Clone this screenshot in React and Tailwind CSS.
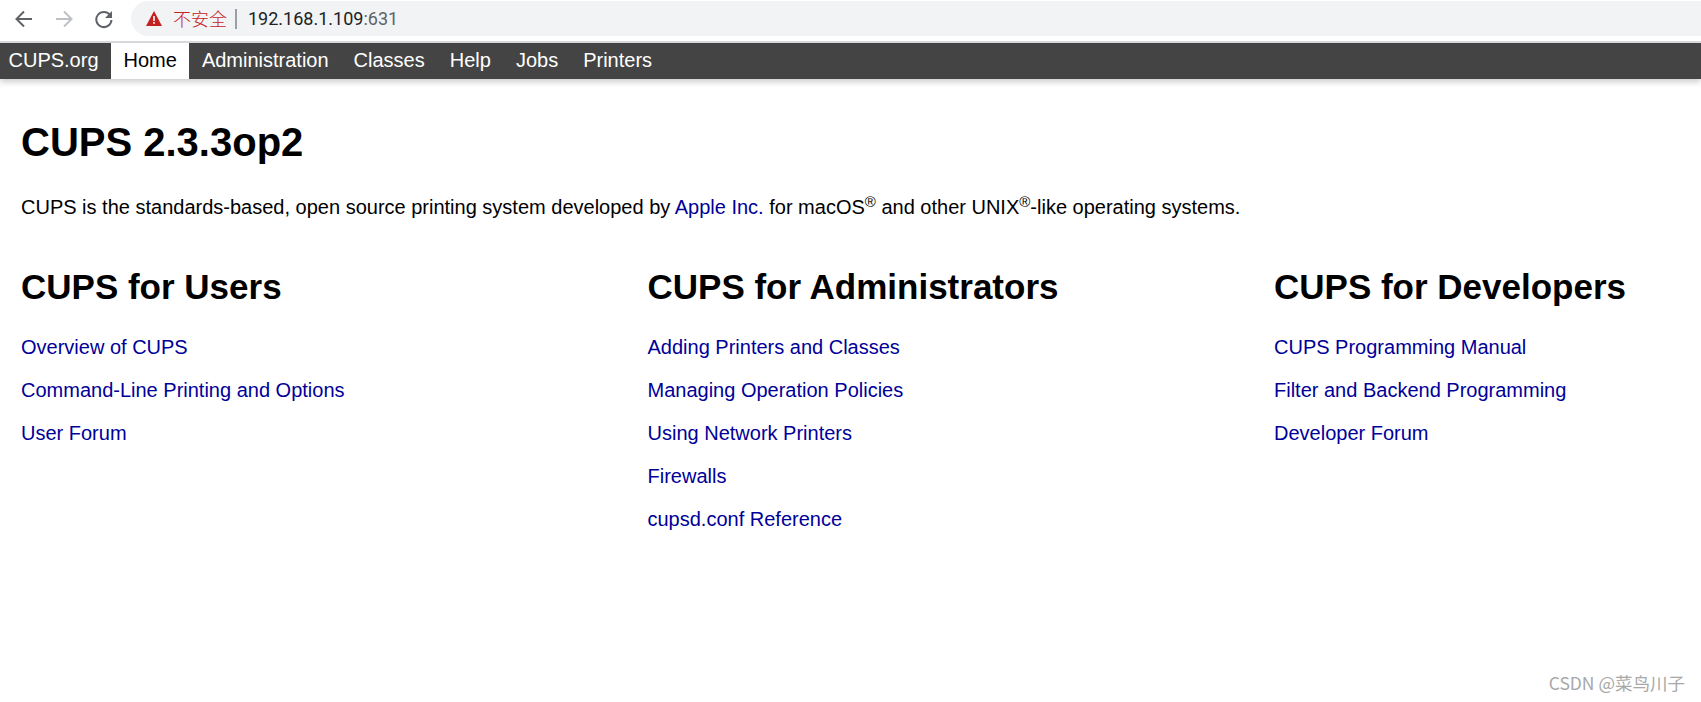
import React from 'react';

const navItems = ['Administration', 'Classes', 'Help', 'Jobs', 'Printers'];

const columns = [
  {
    title: 'CUPS for Users',
    links: ['Overview of CUPS', 'Command-Line Printing and Options', 'User Forum'],
  },
  {
    title: 'CUPS for Administrators',
    links: ['Adding Printers and Classes', 'Managing Operation Policies', 'Using Network Printers', 'Firewalls', 'cupsd.conf Reference'],
  },
  {
    title: 'CUPS for Developers',
    links: ['CUPS Programming Manual', 'Filter and Backend Programming', 'Developer Forum'],
  },
];

const BrowserBar = () => (
  <div className="flex h-[41px] items-start bg-white">
    <div className="flex h-[36px] w-[131px] shrink-0 items-center pl-[14px] pt-[1px]">
      {/* back */}
      <svg width="20" height="20" viewBox="0 0 20 20" fill="none" stroke="#5f6368" strokeWidth="2">
        <path d="M18 10H3M10 2.5 2.5 10l7.5 7.5" />
      </svg>
      {/* forward */}
      <svg className="ml-[20px]" width="20" height="20" viewBox="0 0 20 20" fill="none" stroke="#bdc1c6" strokeWidth="2">
        <path d="M2 10h15M10 2.5l7.5 7.5-7.5 7.5" />
      </svg>
      {/* reload */}
      <svg className="ml-[20px]" width="20" height="20" viewBox="0 0 20 20" fill="none">
        <path d="M16.2 6.2A7.6 7.6 0 1 0 17.5 11" stroke="#5f6368" strokeWidth="2" />
        <path d="M18 2v7h-7z" fill="#5f6368" />
      </svg>
    </div>
    <div className="mt-[1px] flex h-[35px] flex-1 items-center rounded-l-[18px] bg-[#f1f3f4] pl-[15px] font-['Roboto','Noto_Sans_CJK_SC',sans-serif] text-[18px]">
      <svg width="16" height="15" viewBox="0 0 16 15">
        <path d="M8 0 16 15H0z" fill="#c5221f" />
        <path d="M7.2 5h1.6v5H7.2zM7.2 11h1.6v1.7H7.2z" fill="#fff" />
      </svg>
      <span className="ml-[11px] font-['Noto_Sans_CJK_SC',sans-serif] text-[18px] font-light text-[#c5221f]">不安全</span>
      <span className="ml-[8px] h-[20px] w-[2px] bg-[#9aa0a6]" />
      <span className="ml-[11px] text-[#202124]">
        192.168.1.109<span className="text-[#5f6368]">:631</span>
      </span>
    </div>
  </div>
);

const NavBar = () => (
  <div className="relative flex h-[36px] bg-[#444444] shadow-[0_3px_6px_rgba(0,0,0,0.2)]">
    <a className="pr-[6px] pb-[1px] pl-[8.5px] leading-[34px] text-white">CUPS.org</a>
    <a className="ml-[6.5px] bg-white px-[12.5px] pb-[1px] leading-[34px] text-black">Home</a>
    {navItems.map((item) => (
      <a key={item} className="px-[12.5px] pb-[1px] leading-[34px] text-white">
        {item}
      </a>
    ))}
  </div>
);

const App = () => {
  return (
    <div className="relative h-[702px] overflow-hidden bg-white font-['Liberation_Sans',Arial,sans-serif] text-[20px] text-black">
      <BrowserBar />
      <div className="h-[2px] bg-[#dadce0]" />
      <NavBar />

      <div className="px-[21px]">
        <h1 className="mt-[40px] text-[40px] leading-[46px] font-bold">CUPS 2.3.3op2</h1>
        <p className="mt-[28px] leading-[28px]">
          CUPS is the standards-based, open source printing system developed by{' '}
          <a className="text-[#000099]">Apple Inc.</a> for macOS
          <sup className="text-[15px]">®</sup> and other UNIX
          <sup className="text-[15px]">®</sup>-like operating systems.
        </p>

        <div className="mt-[45px] grid grid-cols-[626.5px_626.5px_1fr]">
          {columns.map((col) => (
            <div key={col.title}>
              <h2 className="text-[35px] leading-[42px] font-bold">{col.title}</h2>
              <div className="mt-[28px] flex flex-col gap-[20px]">
                {col.links.map((link) => (
                  <a key={link} className="leading-[23px] text-[#000099]">
                    {link}
                  </a>
                ))}
              </div>
            </div>
          ))}
        </div>
      </div>

      {/* CSDN watermark */}
      <div className="absolute right-[16px] bottom-[6px] font-['Noto_Sans_CJK_SC',sans-serif] text-[17.5px] text-[#a8a8a8]">
        CSDN @菜鸟川子
      </div>
    </div>
  );
};

export default App;
